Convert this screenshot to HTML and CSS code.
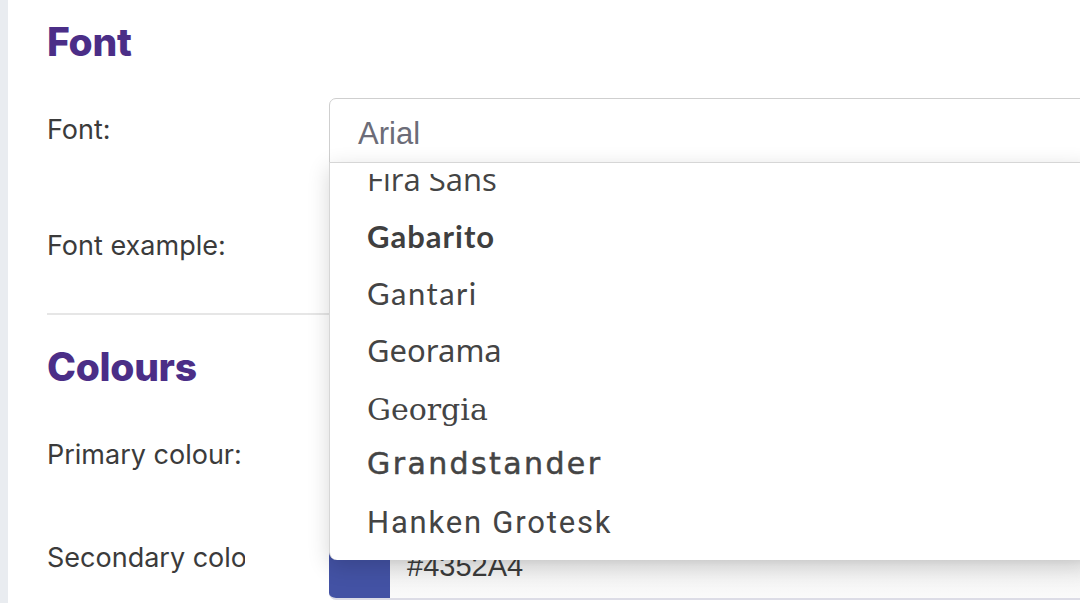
FILE: index.html
```html
<!DOCTYPE html>
<html lang="en">

<head>
  <meta charset="UTF-8">
  <meta name="viewport" content="width=device-width, initial-scale=1.0">
  <title>Settings</title>
  <link rel="stylesheet" href="styles.css">
</head>

<body>
  <div class="page">
    <div class="rail"></div>
    <main class="content">
      <section class="group">
        <h2 class="group-title">Font</h2>
        <div class="row row-font">
          <label class="row-label">Font:</label>
          <div class="row-control">
            <div class="select">Arial</div>
            <div class="listbox">
              <div class="listbox-view">
                <ul class="options">
                  <li class="opt opt-fira">Fira Sans</li>
                  <li class="opt opt-gabarito">Gabarito</li>
                  <li class="opt opt-gantari">Gantari</li>
                  <li class="opt opt-georama">Georama</li>
                  <li class="opt opt-georgia">Georgia</li>
                  <li class="opt opt-grand">Grandstander</li>
                  <li class="opt opt-hanken">Hanken Grotesk</li>
                </ul>
              </div>
            </div>
          </div>
        </div>
        <div class="row row-example">
          <label class="row-label">Font example:</label>
          <div class="row-control">
            <p class="preview">The quick brown fox jumps over the lazy dog</p>
          </div>
        </div>
      </section>
      <hr class="divider">
      <section class="group">
        <h2 class="group-title">Colours</h2>
        <div class="row row-colour">
          <label class="row-label">Primary colour:</label>
          <div class="row-control">
            <div class="colour-input">
              <span class="swatch" style="background: #4b2e83;"></span>
              <span class="colour-value">#4B2E83</span>
            </div>
          </div>
        </div>
        <div class="row row-colour">
          <label class="row-label">Secondary colour:</label>
          <div class="row-control">
            <div class="colour-input">
              <span class="swatch" style="background: #4352a4;"></span>
              <span class="colour-value">#4352A4</span>
            </div>
          </div>
        </div>
      </section>
    </main>
  </div>
</body>

</html>
```

FILE: styles.css
```css
* {
  margin: 0;
  padding: 0;
  box-sizing: border-box;
  list-style: none;
}

body {
  background: #fff;
  font-family: Inter, "Noto Sans", sans-serif;
  color: #3b3b3b;
  overflow: hidden;
}

.page {
  display: flex;
  min-height: 603px;
}

.rail {
  width: 8px;
  flex-shrink: 0;
  background: #e9ecf0;
}

.content {
  flex: 1;
  padding: 18px 0 0 39px;
}

.group-title {
  font-size: 39px;
  line-height: 48px;
  font-weight: 800;
  color: #4b2e87;
  letter-spacing: -0.3px;
}

.row {
  display: grid;
  grid-template-columns: 198px 1fr;
  column-gap: 84px;
  align-items: start;
}

.row-label {
  font-size: 27px;
  line-height: 32px;
  white-space: nowrap;
  overflow: hidden;
}

.row-control {
  position: relative;
}

/* font group */
.row-font {
  margin-top: 32px;
}

.row-font .row-label {
  padding-top: 16px;
}

.select {
  height: 65px;
  margin-right: -10px;
  padding: 17px 28px 0;
  border: 1px solid #cfcfcf;
  border-radius: 7px 0 0 0;
  background: #fff;
  font-family: "Liberation Sans", Arial, sans-serif;
  font-size: 31px;
  color: #6c6c78;
}

.listbox {
  position: absolute;
  top: 64px;
  left: 0;
  right: -10px;
  height: 398px;
  padding-top: 11px;
  background: #fff;
  border-left: 1px solid #d6d6d6;
  border-top: 1px solid #d6d6d6;
  border-radius: 0 0 0 8px;
  box-shadow: 0 6px 22px rgba(0, 0, 0, 0.16);
  z-index: 2;
}

.listbox-view {
  height: 100%;
  overflow: hidden;
}

.options {
  margin-top: -24px;
  padding-left: 37px;
}

.opt {
  height: 57px;
  display: flex;
  align-items: center;
  font-size: 31px;
  color: #444;
}

.opt-fira {
  font-family: "Open Sans", sans-serif;
}

.opt-gabarito {
  font-family: Lato, sans-serif;
  font-weight: 700;
  letter-spacing: 1px;
  color: #3f3f3f;
}

.opt-gantari {
  font-family: Lato, sans-serif;
  letter-spacing: 1.5px;
}

.opt-georama {
  font-family: "Noto Sans", sans-serif;
}

.opt-georgia {
  font-family: "DejaVu Serif", Georgia, serif;
  font-size: 30px;
  padding-top: 6px;
}

.opt-grand {
  font-family: "DejaVu Sans", sans-serif;
  font-size: 30px;
  letter-spacing: 2.4px;
  -webkit-text-stroke: 0.5px #444;
}

.opt-hanken {
  font-family: Roboto, sans-serif;
  letter-spacing: 1.8px;
  padding-top: 3px;
}

.row-example {
  margin-top: 67px;
  height: 70px;
}

.preview {
  visibility: hidden;
}

.divider {
  border: none;
  border-top: 2px solid #e6e6e6;
  margin: 13px 0 0;
}

/* colours group */
.group + .divider + .group .group-title {
  margin-top: 28px;
}

.row-colour {
  margin-top: 46px;
}

.row-colour + .row-colour {
  margin-top: 43px;
}

.row-colour .row-label {
  padding-top: 2px;
}

.colour-input {
  display: flex;
  height: 60px;
  margin-right: -10px;
  border-radius: 7px 0 0 7px;
  border-bottom: 2px solid #dcdce6;
  overflow: hidden;
  background: linear-gradient(#d4d4d4, #f1f1f1 45%, #fafafa);
}

.swatch {
  width: 61px;
  flex-shrink: 0;
}

.colour-value {
  padding: 10px 0 0 17px;
  font-family: "Liberation Sans", Arial, sans-serif;
  font-size: 29px;
  color: #3b3b3b;
}
```
